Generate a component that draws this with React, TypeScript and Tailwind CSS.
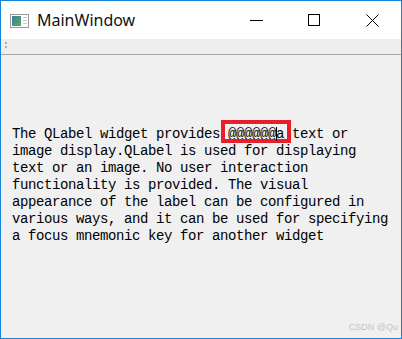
const lines = [
  "image display.QLabel is used for displaying",
  "text or an image. No user interaction",
  "functionality is provided. The visual",
  "appearance of the label can be configured in",
  "various ways, and it can be used for specifying",
  "a focus mnemonic key for another widget",
];

const AppIcon = () => (
  <svg width="19" height="14" viewBox="0 0 19 14">
    <rect x="0.5" y="0.5" width="18" height="13" fill="#fff" stroke="#9a9a9a" />
    <defs>
      <linearGradient id="g" x1="0" y1="0" x2="1" y2="1">
        <stop offset="0" stopColor="#3b7fa0" />
        <stop offset="1" stopColor="#5aa860" />
      </linearGradient>
    </defs>
    <rect x="2" y="2" width="9" height="10" fill="url(#g)" />
    <rect x="13" y="3" width="4" height="1" fill="#c8c8c8" />
    <rect x="13" y="6" width="4" height="1" fill="#c8c8c8" />
    <rect x="13" y="9" width="4" height="1" fill="#c8c8c8" />
  </svg>
);

export default function App() {
  return (
    <div className="w-[402px] h-[339px] border border-[#1883d7] bg-[#f0f0f0] flex flex-col relative overflow-hidden">
      {/* title bar */}
      <div className="h-[38px] bg-white flex items-center shrink-0">
        <div className="ml-[9px] mt-[1px]">
          <AppIcon />
        </div>
        <span
          className="ml-[8px] text-[16px] text-[#111] leading-none"
          style={{ fontFamily: '"Segoe UI", "Noto Sans", sans-serif' }}
        >
          MainWindow
        </span>
        <div className="ml-auto flex items-center h-full">
          <div className="w-[58px] h-full flex items-center justify-center">
            <div className="w-[13px] h-px bg-black"></div>
          </div>
          <div className="w-[58px] h-full flex items-center justify-center">
            <div className="w-[12px] h-[12px] border border-black"></div>
          </div>
          <div className="w-[58px] h-full flex items-center justify-center">
            <svg width="13" height="13" viewBox="0 0 13 13">
              <path d="M0.5 0.5L12.5 12.5M12.5 0.5L0.5 12.5" stroke="#000" strokeWidth="1" />
            </svg>
          </div>
        </div>
      </div>
      {/* toolbar strip */}
      <div className="h-[12px] bg-[#eeeeee] border-b border-[#a8a8a8] box-content shrink-0 flex flex-col gap-[2px] pl-[4px] pt-[3px]">
        <div className="w-[2px] h-[2px] bg-[#b0b0b0]"></div>
        <div className="w-[2px] h-[2px] bg-[#b0b0b0]"></div>
      </div>
      {/* central label */}
      <div
        className="pl-[11px] pt-[71px] text-[14px] leading-[17px] tracking-[-0.4px] text-black whitespace-pre"
        style={{ fontFamily: '"Liberation Mono", "DejaVu Sans Mono", monospace' }}
      >
        <div>
          The QLabel widget provides{" "}
          <span className="relative">
            @@@@@@a
            <span className="absolute left-[-7px] top-[-6px] w-[70px] h-[23px] border-[4px] border-[#e81f2a]"></span>
            <span className="absolute left-[48px] top-[1px] w-px h-[14px] bg-black"></span>
          </span>{" "}
          text or
        </div>
        {lines.map((l) => (
          <div key={l}>{l}</div>
        ))}
      </div>
      <span
        className="absolute right-[3px] bottom-[4px] text-[9px] text-[#c4c4c4]"
        style={{ fontFamily: '"Liberation Sans", sans-serif' }}
      >
        CSDN @Qu
      </span>
    </div>
  );
}
